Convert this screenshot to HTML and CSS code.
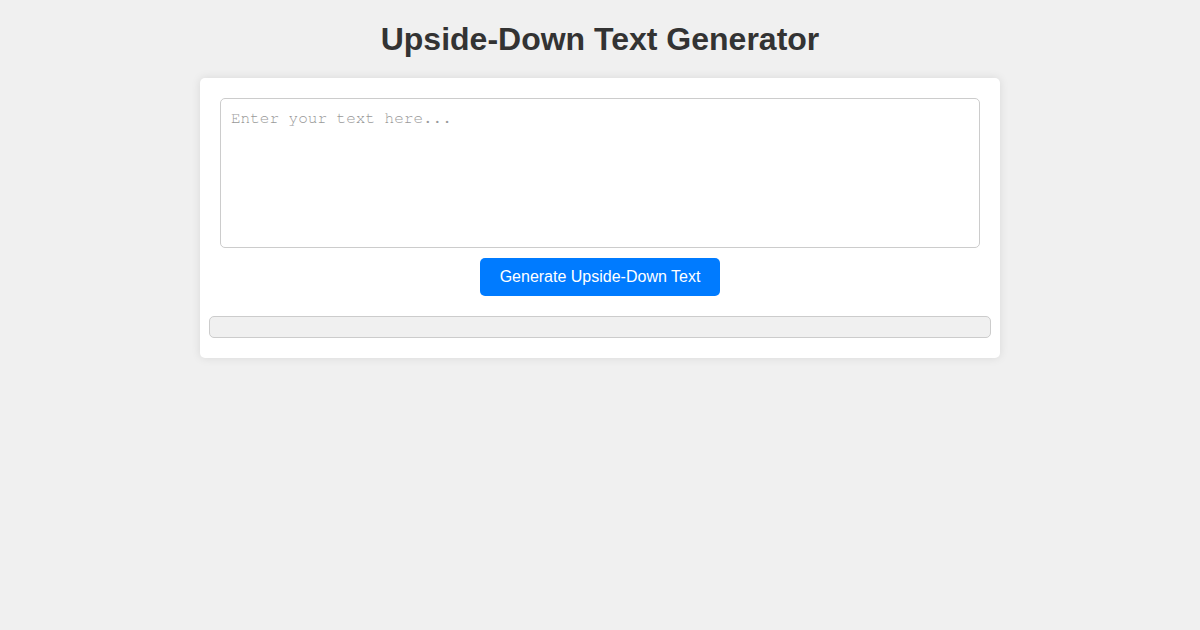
FILE: index.html
```html
<!DOCTYPE html>
<html lang="en">
<head>
<meta charset="utf-8">
<title>Upside-Down Text Generator</title>
<link rel="stylesheet" href="styles.css">
</head>
<body>
<h1 class="title">Upside-Down Text Generator</h1>
<main class="card">
  <textarea class="input" placeholder="Enter your text here..."></textarea>
  <div class="actions">
    <button class="btn" type="button">Generate Upside-Down Text</button>
  </div>
  <div class="output"></div>
</main>
</body>
</html>
```

FILE: styles.css
```css
html, body {
  margin: 0;
  padding: 0;
}
body {
  background: #f0f0f0;
  font-family: "Liberation Sans", Arial, sans-serif;
  color: #333;
  padding: 20px;
}
.title {
  margin: 1px 0 20px;
  text-align: center;
  font-size: 32px;
  font-weight: bold;
  line-height: 37px;
  color: #333;
}
.card {
  display: block;
  width: 800px;
  box-sizing: border-box;
  margin: 0 auto;
  background: #fff;
  border-radius: 5px;
  box-shadow: 0 0 10px rgba(0, 0, 0, 0.1);
  padding: 20px;
}
.input {
  display: block;
  width: 100%;
  height: 150px;
  box-sizing: border-box;
  padding: 11px 10px 9px;
  border: 1px solid #ccc;
  border-radius: 5px;
  font-family: "Nimbus Mono PS", "Nimbus Mono L", FreeMono, Courier, "Liberation Mono", monospace;
  font-size: 16px;
  resize: none;
  margin: 0;
}
.input::placeholder {
  color: #999;
}
.actions {
  display: flex;
  justify-content: center;
  margin-top: 10px;
}
.btn {
  height: 38px;
  padding: 0 20px;
  background: #007bff;
  color: #fff;
  border: none;
  border-radius: 5px;
  font-family: "Liberation Sans", Arial, sans-serif;
  font-size: 16px;
  cursor: pointer;
}
.output {
  margin: 20px -11px 0;
  height: 22px;
  box-sizing: border-box;
  padding: 10px;
  background: #f0f0f0;
  border: 1px solid #ccc;
  border-radius: 5px;
}
```
